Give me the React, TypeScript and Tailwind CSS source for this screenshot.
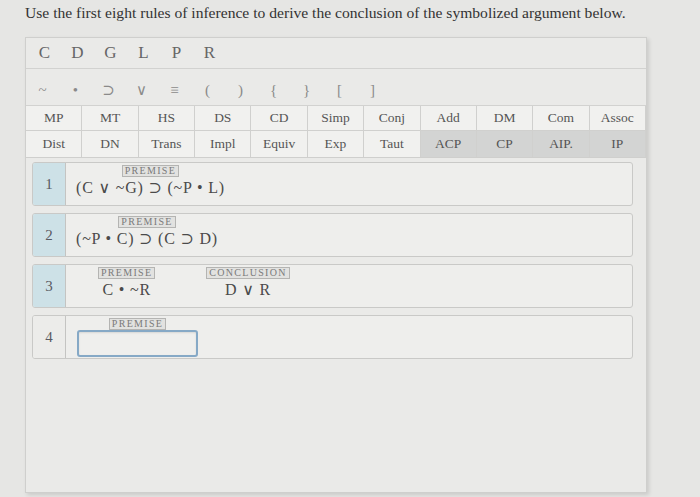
const serif = { fontFamily: '"Liberation Serif", "DejaVu Serif", serif' }

const letters = ["C", "D", "G", "L", "P", "R"]
const symbols = ["~", "•", "⊃", "∨", "≡", "(", ")", "{", "}", "[", "]"]
const rulesTop = ["MP", "MT", "HS", "DS", "CD", "Simp", "Conj", "Add", "DM", "Com", "Assoc"]
const rulesBottom = ["Dist", "DN", "Trans", "Impl", "Equiv", "Exp", "Taut", "ACP", "CP", "AIP.", "IP"]

function Tag({ text }: { text: string }) {
  return (
    <span className="border border-[#b4b4b2] bg-[#e2e2e0] px-[2px] text-[10px] leading-[10px] tracking-[1.3px] text-[#7a7a7a]">
      {text}
    </span>
  )
}

function Statement({ tag, formula, className }: { tag: string; formula: string; className?: string }) {
  return (
    <div className={"flex flex-col items-center " + (className ?? "")}>
      <Tag text={tag} />
      <div className="mt-[2px] whitespace-pre text-[16px] leading-[18px] tracking-[0.8px] text-[#4a4a4a]">
        {formula}
      </div>
    </div>
  )
}

function Line({ n, blue, children }: { n: number; blue: boolean; children: React.ReactNode }) {
  return (
    <div className="ml-[6px] mr-[13px] flex h-[44px] overflow-hidden rounded-[3px] border border-[#c9c9c7] bg-[#eeeeec]">
      <div
        className={
          "flex w-[33px] shrink-0 items-center justify-center border-r border-[#c4c4c2] text-[15px] text-[#5a5a62] " +
          (blue ? "bg-[#cde1e7]" : "bg-[#ececea]")
        }
      >
        {n}
      </div>
      <div className="flex flex-1 items-start pt-[2px]">{children}</div>
    </div>
  )
}

export default function App() {
  return (
    <div className="h-[497px] overflow-hidden bg-[#e6e6e4] pt-[4px]" style={serif}>
      <div className="pl-[25px] text-[15.6px] leading-[18px] text-[#333]">
        Use the first eight rules of inference to derive the conclusion of the symbolized argument below.
      </div>

      <div className="ml-[25px] mt-[15px] h-[456px] w-[622px] border border-[#cfcfcd] bg-[#eaeae8] shadow-[2px_2px_4px_rgba(0,0,0,0.12)]">
        <div className="flex h-[31px] items-center border-b border-[#d2d2d0] pl-[2px] text-[17px] text-[#666]">
          {letters.map((l) => (
            <span key={l} className="w-[33px] text-center">
              {l}
            </span>
          ))}
        </div>

        <div className="flex h-[37px] items-center border-b border-[#d2d2d0] pt-[6px] text-[15px] text-[#8a8a8a]">
          {symbols.map((s, i) => (
            <span key={i} className="w-[33px] text-center">
              {s}
            </span>
          ))}
        </div>

        <div className="grid grid-cols-11 border-b border-[#cfcfcd] text-[13.5px] text-[#555]">
          {rulesTop.map((r) => (
            <div
              key={r}
              className="flex h-[25px] items-center justify-center border-b border-r border-[#d0d0ce] bg-[#f1f1ef] last:border-r-0"
            >
              {r}
            </div>
          ))}
          {rulesBottom.map((r, i) => (
            <div
              key={r}
              className={
                "flex h-[26px] items-center justify-center border-r border-[#d0d0ce] " +
                (i >= 7 ? "bg-[#d3d4d3]" : "bg-[#f1f1ef]")
              }
            >
              {r}
            </div>
          ))}
        </div>

        <div className="flex flex-col gap-[7px] pt-[4px]">
          <Line n={1} blue>
            <Statement tag="PREMISE" formula="(C ∨ ~G) ⊃ (~P • L)" className="ml-[10px]" />
          </Line>
          <Line n={2} blue>
            <Statement tag="PREMISE" formula="(~P • C) ⊃ (C ⊃ D)" className="ml-[10px]" />
          </Line>
          <Line n={3} blue>
            <Statement tag="PREMISE" formula="C • ~R" className="ml-[32px]" />
            <Statement tag="CONCLUSION" formula="D ∨ R" className="ml-[51px]" />
          </Line>
          <Line n={4} blue={false}>
            <div className="ml-[11px] flex flex-col items-center">
              <Tag text="PREMISE" />
              <div className="h-[27px] w-[121px] rounded-[3px] border-2 border-[#86a9c6] bg-[#efefed] shadow-[inset_0_1px_2px_rgba(0,0,0,0.1)]" />
            </div>
          </Line>
        </div>
      </div>
    </div>
  )
}
